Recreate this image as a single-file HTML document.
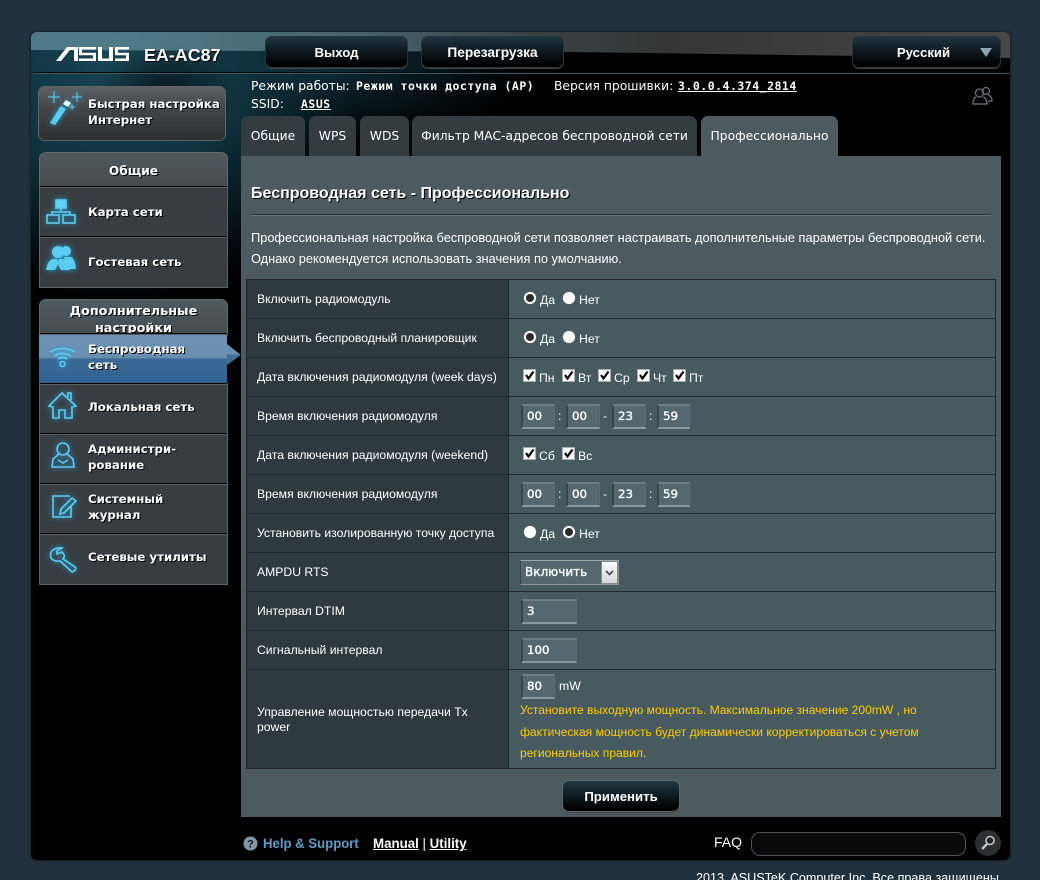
<!DOCTYPE html>
<html lang="ru"><head><meta charset="utf-8"><title>ASUS EA-AC87</title>
<style>
html,body{margin:0;padding:0;width:1040px;height:880px;overflow:hidden;background:#21323e;}
body{position:relative;font-family:"Liberation Sans",sans-serif;color:#fff;font-size:12px;}
.a{position:absolute;white-space:nowrap;}
#panel{position:absolute;left:31px;top:32px;width:979px;height:828px;border-radius:6px;background:#000;overflow:hidden;box-shadow:0 0 3px #111;}
#glow{position:absolute;left:0;top:0;width:979px;height:300px;background:
radial-gradient(ellipse 70px 50px at 135px 60px,rgba(8,18,22,.85),transparent),
radial-gradient(ellipse 240px 250px at 90px 20px,#184655 0,#103340 50%,transparent 100%),
radial-gradient(ellipse 200px 90px at 300px 25px,#0e2d38 0,transparent 100%);}
#band{position:absolute;left:0;top:0;width:979px;height:26px;clip-path:polygon(0 0,100% 0,100% 26px,55% 20px,0 18px);background:linear-gradient(90deg,rgba(120,165,178,.6) 0,rgba(110,145,155,.6) 30%,rgba(105,105,105,.5) 65%,rgba(110,110,110,.65) 100%);}
#hl{position:absolute;left:2px;top:40px;width:977px;height:1px;background:#0b0b0b;box-shadow:0 1px 0 #3c5560;}
.tb{position:absolute;box-sizing:border-box;background:linear-gradient(#1e3540,#000 90%);border:1px solid #26353c;border-radius:7px;color:#fff;font:bold 13.200px "Liberation Sans",sans-serif;text-align:center;box-shadow:0 1px 0 #444;}
.v{font-family:"DejaVu Sans",sans-serif;font-weight:bold;font-size:11.750px;text-shadow:1px 1px 0 #000;color:#fff;}
.g{position:absolute;left:39px;width:189px;box-sizing:border-box;}
.it{position:absolute;left:39px;width:189px;box-sizing:border-box;background:#383d41;border:1px solid #5d6468;border-top:0;border-bottom:0;}
.sep{position:absolute;left:40px;width:187px;height:1px;background:#000;border-bottom:1px solid #5a6166;}
.ic{position:absolute;filter:drop-shadow(0 0 3px #2aa6dd);}
.ic *{fill:none;stroke:#5ccdf2;stroke-width:1.6;}
.ic .f{fill:#5ccdf2;stroke:none;}
.tab{position:absolute;top:116px;height:40px;box-sizing:border-box;background:#333c41;border-radius:7px 7px 0 0;color:#fff;line-height:41px;text-align:center;font-family:"DejaVu Sans","Liberation Sans",sans-serif;font-size:12.300px;}
#main{position:absolute;left:241px;top:156px;width:760px;height:661px;background:#4d5a60;}
.info{font-family:"DejaVu Sans",sans-serif;font-size:12.300px;}
.m{font:bold 11.500px/15px "DejaVu Sans Mono","DejaVu Sans",monospace;letter-spacing:.5px;text-shadow:1px 0 0 #000;}
#tbl{position:absolute;left:246px;top:279px;width:750px;height:490px;background:#475a60;border:1px solid #1f2528;box-sizing:border-box;}
#lc{position:absolute;left:247px;top:280px;width:261px;height:488px;background:#2f3a40;}
#vl{position:absolute;left:508px;top:280px;width:1px;height:488px;background:#22292c;}
.hr{position:absolute;left:247px;width:748px;height:1px;background:#22292c;}
.l{position:absolute;left:257px;font-size:12.200px;color:#fff;white-space:nowrap;line-height:14px;}
.t{position:absolute;font-size:12.250px;color:#fff;white-space:nowrap;line-height:14px;}
.r{position:absolute;width:12px;height:12px;border-radius:50%;background:#fff;box-shadow:0 0 1px #aaa;}
.r.on::after{content:"";position:absolute;left:2px;top:2px;width:8px;height:8px;border-radius:50%;background:#2b2b2b;}
.c{position:absolute;width:11px;height:11px;background:#fff;border:1px solid #a5acae;}
.c svg{position:absolute;left:0;top:0;width:11px;height:11px;}
.c path{fill:none;stroke:#000;stroke-width:2.2;}
.inp{position:absolute;box-sizing:border-box;height:25px;background:#55686f;border-top:2px solid #6f7d82;border-left:2px solid #39454a;border-right:1px solid #5a6c72;border-bottom:2px solid #8a9a9e;color:#fff;font:11.800px/21px "DejaVu Sans",sans-serif;-webkit-text-stroke:.35px #fff;padding-left:4px;}
.y{position:absolute;left:520px;font-size:12.080px;color:#ffcc00;white-space:nowrap;line-height:14px;}
</style></head><body>
<div id="panel"><div id="glow"></div><div id="band"></div><div id="hl"></div></div>

<svg class="a" style="left:56px;top:46px" width="73" height="16" viewBox="0 0 73 16"><g fill="#fff">
<path d="M0 15 L11 1 H22 V15 H18 V4 H14 L5 15Z"/><path d="M23 1H40V3.500H26V6.800H40V15H23V12.500H37V9.200H23Z"/><path d="M42 1H46V12.500H53V1H57V15H42Z"/><path d="M59 1H73V3.500H62V6.800H73V15H59V12.500H70V9.200H59Z"/></g></svg>
<div class="a" style="left:144px;top:45px;font:bold 17.900px/20px 'Liberation Sans',sans-serif;text-shadow:1px 1px 0 #000">EA-AC87</div>

<div class="tb" style="left:265px;top:36px;width:143px;height:32px;line-height:31px">Выход</div>
<div class="tb" style="left:421px;top:36px;width:143px;height:32px;line-height:31px;font-size:13.700px">Перезагрузка</div>
<div class="tb" style="left:852px;top:36px;width:149px;height:32px;line-height:31px;padding-right:6px">Русский</div>
<svg class="a" style="left:980px;top:48px" width="12" height="9"><path d="M0 0H12L6 9Z" fill="#8ea7b4"/></svg>

<!-- Quick setup -->
<div class="a" style="left:38px;top:86px;width:188px;height:55px;box-sizing:border-box;border:1px solid #5f6669;border-radius:7px;background:linear-gradient(#5d6062,#434547 40%,#2b2d2e)"></div>
<svg class="ic" style="left:46px;top:90px" width="38" height="36" viewBox="0 0 38 36"><path class="f" d="M4 33 L15 16 L20 19 L9 35Z"/><path class="f" d="M17 14 L20 10 L25 13 L22 17Z" style="fill:#e4f7fb"/><path d="M8 1V13M2 7H14M31 2V12M26 7H36M26 14V20M23 17H29" style="stroke-width:1"/></svg>
<div class="a v" style="left:88px;top:96px;line-height:16px">Быстрая настройка<br>Интернет</div>

<!-- Общие -->
<div class="g" style="top:152px;height:34px;background:linear-gradient(#4f5a5f,#454c50);border:1px solid #646b6f;border-bottom:0;border-radius:7px 7px 0 0"></div>
<div class="a v" style="left:39px;width:189px;text-align:center;top:163px;line-height:16px;font-size:12.200px">Общие</div>
<div class="it" style="top:186px;height:102px;border-bottom:1px solid #5d6468"></div>
<div class="sep" style="top:186px"></div><div class="sep" style="top:236px"></div>
<svg class="ic" style="left:46px;top:198px" width="30" height="26" viewBox="0 0 30 26"><rect x="10" y="2" width="10" height="8" style="fill:#62d2f5"/><path d="M15 10V14M6 17V14H24V17"/><rect x="1" y="17" width="12" height="8"/><rect x="17" y="17" width="12" height="8"/></svg>
<div class="a v" style="left:88px;top:204px;line-height:16px">Карта сети</div>
<svg class="ic" style="left:46px;top:245px" width="30" height="27" viewBox="0 0 30 27"><circle class="f" cx="20" cy="6" r="5"/><path class="f" d="M18 12H25Q29 14 30 24H22Z"/><circle class="f" cx="12" cy="7" r="6"/><path class="f" d="M0 25 Q2 15 7 14 H11 L12 17 L13 14 H17 Q22 15 24 25 H15 L12 19 L9 25Z"/></svg>
<div class="a v" style="left:88px;top:254px;line-height:16px">Гостевая сеть</div>

<!-- Дополнительные -->
<div class="g" style="top:299px;height:36px;background:linear-gradient(#4f5a5f,#454c50);border:1px solid #646b6f;border-bottom:0;border-radius:7px 7px 0 0"></div>
<div class="a v" style="left:39px;width:189px;text-align:center;top:303px;line-height:17px;height:31px;overflow:hidden;font-size:12.800px">Дополнительные<br>настройки</div>
<div class="sep" style="top:333px"></div>
<div class="a" style="left:39px;top:335px;width:188px;height:48px;background:linear-gradient(#6f93b5 0,#6a8eb0 47%,#3b6a98 50%,#32628f 100%);border-bottom:1px solid #1f3a52"></div>
<svg class="a" style="left:227px;top:344px" width="14" height="21"><defs><linearGradient id="ar" x1="0" y1="0" x2="0" y2="1"><stop offset="0" stop-color="#6a8eb0"/><stop offset=".5" stop-color="#6a8eb0"/><stop offset=".5" stop-color="#456f98"/><stop offset="1" stop-color="#3b6a98"/></linearGradient></defs><path d="M0 0L14 11L0 21Z" fill="url(#ar)"/></svg>
<svg class="ic" style="left:49px;top:345px" width="28" height="24" viewBox="0 0 28 24"><path d="M1 7Q13 0 26 7M5 11Q13 6 22 11M9 14Q13 11 18 14"/><circle cx="13.500" cy="19" r="2.500"/></svg>
<div class="a v" style="left:88px;top:341px;line-height:16px">Беспроводная<br>сеть</div>

<div class="it" style="top:383px;height:202px;border-bottom:1px solid #5d6468"></div>
<div class="sep" style="top:383px"></div><div class="sep" style="top:433px"></div><div class="sep" style="top:483px"></div><div class="sep" style="top:533px"></div>

<svg class="ic" style="left:48px;top:391px" width="29" height="29" viewBox="0 0 29 29"><path d="M1 15 L14 2 L28 15 L24 16 V27 H17 V19 H11 V27 H5 V16Z M20 6V2H23V9"/></svg>
<div class="a v" style="left:88px;top:399px;line-height:16px">Локальная сеть</div>
<svg class="ic" style="left:51px;top:442px" width="24" height="28" viewBox="0 0 24 28"><circle cx="12" cy="7" r="6"/><path d="M8 12 L2 17 L1 25H23L22 17L16 12M7 18L12 21L17 18"/></svg>
<div class="a v" style="left:88px;top:441px;line-height:16px">Администри-<br>рование</div>
<svg class="ic" style="left:51px;top:494px" width="26" height="26" viewBox="0 0 26 26"><path d="M19 2H2V23H20V12"/><path d="M9 20 L10 15 L21 4 L25 7 L13 19Z"/></svg>
<div class="a v" style="left:88px;top:491px;line-height:16px">Системный<br>журнал</div>
<svg class="ic" style="left:49px;top:546px" width="29" height="28" viewBox="0 0 29 28"><path d="M2 6 Q6 1 13 2 L8 5 V8 L13 6 Q17 10 14 13 L26 21 Q28 23 25 25 Q23 27 21 24 L11 15 Q5 16 2 12 Q1 9 2 6Z"/></svg>
<div class="a v" style="left:88px;top:549px;line-height:16px">Сетевые утилиты</div>

<!-- info -->
<div class="a info" style="left:251px;top:79px;line-height:15px">Режим работы:</div>
<div class="a m" style="left:356px;top:79px">Режим точки доступа (AP)</div>
<div class="a info" style="left:554px;top:79px;line-height:15px">Версия прошивки:</div>
<div class="a m" style="left:678px;top:79px;text-decoration:underline">3.0.0.4.374_2814</div>
<div class="a info" style="left:251px;top:97px;line-height:15px">SSID:</div>
<div class="a m" style="left:301px;top:97px;text-decoration:underline">ASUS</div>
<svg class="a" style="left:972px;top:86px" width="21" height="19" viewBox="0 0 21 19"><g fill="none" stroke="#6f7376" stroke-width="1.300"><circle cx="14" cy="5" r="3.500"/><path d="M16 9Q20 10 20 15H16"/><circle cx="7.500" cy="7" r="4"/><path d="M4 11Q1 12 1 18H15Q15 12 11 11"/></g></svg>

<!-- tabs -->
<div class="tab" style="left:241px;width:64px">Общие</div>
<div class="tab" style="left:309px;width:47px">WPS</div>
<div class="tab" style="left:360px;width:49px">WDS</div>
<div class="tab" style="left:412px;width:285px">Фильтр MAC-адресов беспроводной сети</div>
<div class="tab" style="left:701px;width:137px;background:#4d5a60">Профессионально</div>

<div id="main"></div>
<div class="a" style="left:251px;top:184px;font:bold 16px/20px 'Liberation Sans',sans-serif;text-shadow:1px 1px 0 #000">Беспроводная сеть - Профессионально</div>
<div class="a" style="left:251px;top:214px;width:740px;height:1px;background:#2d3437;box-shadow:0 1px 0 #6a767b"></div>
<div class="a" style="left:251px;top:227px;font-size:12.800px;line-height:21px">Профессиональная настройка беспроводной сети позволяет настраивать дополнительные параметры беспроводной сети.<br>Однако рекомендуется использовать значения по умолчанию.</div>

<div id="tbl"></div><div id="lc"></div><div id="vl"></div>
<div class="hr" style="top:318px"></div><div class="hr" style="top:357px"></div><div class="hr" style="top:396px"></div><div class="hr" style="top:435px"></div><div class="hr" style="top:474px"></div><div class="hr" style="top:513px"></div><div class="hr" style="top:552px"></div><div class="hr" style="top:591px"></div><div class="hr" style="top:630px"></div><div class="hr" style="top:669px"></div>

<div class="l" style="top:292px">Включить радиомодуль</div>
<div class="l" style="top:331px">Включить беспроводный планировщик</div>
<div class="l" style="top:370px">Дата включения радиомодуля (week days)</div>
<div class="l" style="top:409px">Время включения радиомодуля</div>
<div class="l" style="top:448px">Дата включения радиомодуля (weekend)</div>
<div class="l" style="top:487px">Время включения радиомодуля</div>
<div class="l" style="top:526px">Установить изолированную точку доступа</div>
<div class="l" style="top:565px">AMPDU RTS</div>
<div class="l" style="top:604px">Интервал DTIM</div>
<div class="l" style="top:643px">Сигнальный интервал</div>
<div class="l" style="top:705px;line-height:15px">Управление мощностью передачи Tx<br>power</div>

<div class="r on" style="left:524px;top:292px"></div><div class="t" style="left:540px;top:293px">Да</div><div class="r" style="left:563px;top:292px"></div><div class="t" style="left:579px;top:293px">Нет</div>
<div class="r on" style="left:524px;top:331px"></div><div class="t" style="left:540px;top:332px">Да</div><div class="r" style="left:563px;top:331px"></div><div class="t" style="left:579px;top:332px">Нет</div>

<div class="c" style="left:523px;top:369px"><svg viewBox="0 0 11 11"><path d="M2 5L4.500 8.500L9.500 1.500"/></svg></div><div class="t" style="left:539px;top:371px">Пн</div>
<div class="c" style="left:562px;top:369px"><svg viewBox="0 0 11 11"><path d="M2 5L4.500 8.500L9.500 1.500"/></svg></div><div class="t" style="left:578px;top:371px">Вт</div>
<div class="c" style="left:598px;top:369px"><svg viewBox="0 0 11 11"><path d="M2 5L4.500 8.500L9.500 1.500"/></svg></div><div class="t" style="left:614px;top:371px">Ср</div>
<div class="c" style="left:637px;top:369px"><svg viewBox="0 0 11 11"><path d="M2 5L4.500 8.500L9.500 1.500"/></svg></div><div class="t" style="left:653px;top:371px">Чт</div>
<div class="c" style="left:673px;top:369px"><svg viewBox="0 0 11 11"><path d="M2 5L4.500 8.500L9.500 1.500"/></svg></div><div class="t" style="left:689px;top:371px">Пт</div>

<div class="inp" style="left:521px;top:404px;width:34px">00</div><div class="t" style="left:558px;top:409px">:</div><div class="inp" style="left:566px;top:404px;width:34px">00</div><div class="t" style="left:603px;top:409px">-</div><div class="inp" style="left:612px;top:404px;width:34px">23</div><div class="t" style="left:649px;top:409px">:</div><div class="inp" style="left:657px;top:404px;width:33px">59</div>

<div class="c" style="left:523px;top:447px"><svg viewBox="0 0 11 11"><path d="M2 5L4.500 8.500L9.500 1.500"/></svg></div><div class="t" style="left:539px;top:449px">Сб</div>
<div class="c" style="left:562px;top:447px"><svg viewBox="0 0 11 11"><path d="M2 5L4.500 8.500L9.500 1.500"/></svg></div><div class="t" style="left:578px;top:449px">Вс</div>

<div class="inp" style="left:521px;top:482px;width:34px">00</div><div class="t" style="left:558px;top:487px">:</div><div class="inp" style="left:566px;top:482px;width:34px">00</div><div class="t" style="left:603px;top:487px">-</div><div class="inp" style="left:612px;top:482px;width:34px">23</div><div class="t" style="left:649px;top:487px">:</div><div class="inp" style="left:657px;top:482px;width:33px">59</div>

<div class="r" style="left:524px;top:526px"></div><div class="t" style="left:540px;top:527px">Да</div><div class="r on" style="left:563px;top:526px"></div><div class="t" style="left:579px;top:527px">Нет</div>

<div class="a" style="left:520px;top:560px;width:99px;height:25px;box-sizing:border-box;background:#55686f;border:1px solid #8b9599;border-top:1px solid #9aa;border-left:1px solid #39464b;font:12px/22px 'DejaVu Sans',sans-serif;-webkit-text-stroke:.35px #fff;padding-left:4px">Включить<div style="position:absolute;right:0;top:0;width:17px;height:23px;background:linear-gradient(#fafafa,#d8d8d8);border:1px solid #888;box-sizing:border-box"><svg style="position:absolute;left:3px;top:8px" width="9" height="6"><path d="M1 1L4.500 4.500L8 1" fill="none" stroke="#444" stroke-width="1.600"/></svg></div></div>

<div class="inp" style="left:521px;top:599px;width:56px">3</div>
<div class="inp" style="left:521px;top:638px;width:56px">100</div>
<div class="inp" style="left:521px;top:674px;width:34px">80</div><div class="t" style="left:559px;top:679px">mW</div>
<div class="y" style="top:703px">Установите выходную мощность. Максимальное значение 200mW , но</div>
<div class="y" style="top:725px">фактическая мощность будет динамически корректироваться с учетом</div>
<div class="y" style="top:746px">региональных правил.</div>

<div class="tb" style="left:562px;top:780px;width:118px;height:32px;line-height:32px;border-color:#5c666a;background:linear-gradient(#1f3842,#000 95%)">Применить</div>

<!-- footer -->
<svg class="a" style="left:243px;top:836px" width="15" height="15"><circle cx="7.500" cy="7.500" r="7" fill="#7f99a6"/><text x="7.500" y="11.500" font-family="Liberation Sans" font-weight="bold" font-size="11" fill="#10181c" text-anchor="middle">?</text></svg>
<div class="a" style="left:263px;top:835px;font:bold 14px/17px 'Liberation Sans',sans-serif;color:#5b9cc9;transform:scaleX(.94);transform-origin:0 0">Help &amp; Support</div>
<div class="a" style="left:373px;top:835px;font:bold 14px/17px 'Liberation Sans',sans-serif;transform:scaleX(.95);transform-origin:0 0"><u>Manual</u> <span style="font-weight:normal">|</span> <u>Utility</u></div>
<div class="a" style="left:714px;top:834px;font-size:14px;line-height:17px">FAQ</div>
<div class="a" style="left:751px;top:832px;width:215px;height:24px;box-sizing:border-box;background:#0a0a0a;border:1px solid #4a5257;border-radius:9px"></div>
<div class="a" style="left:975px;top:830px;width:26px;height:26px;border-radius:50%;background:#2c2f31"></div>
<svg class="a" style="left:979px;top:834px" width="18" height="18"><circle cx="11" cy="6.500" r="4" fill="#222" stroke="#c4c4c4" stroke-width="1.600"/><path d="M8 10L3 15" stroke="#c4c4c4" stroke-width="2.400"/></svg>
<div class="a" style="left:696px;top:871px;font-size:12.600px;line-height:14px">2013&nbsp; ASUSTeK Computer Inc. Все права защищены.</div>
</body></html>
